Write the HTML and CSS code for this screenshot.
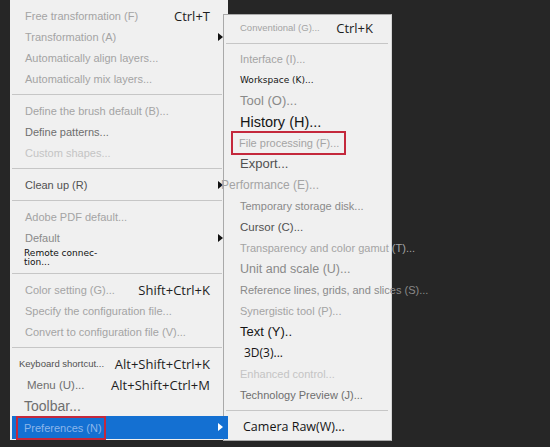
FILE: index.html
```html
<!DOCTYPE html>
<html lang="en">
<head>
    <meta charset="UTF-8">
    <meta name="viewport" content="width=device-width, initial-scale=1.0">
    <title>Edit menu</title>
    <link rel="stylesheet" href="styles.css">
</head>
<body>
 <main class="screen">
    <div class="menu">
        <div class="item off">Free transformation (F)<span class="key">Ctrl+T</span></div>
        <div class="item off">Transformation (A)<span class="arrow"></span></div>
        <div class="item off">Automatically align layers...</div>
        <div class="item off">Automatically mix layers...</div>
        <div class="sep"></div>
        <div class="item off">Define the brush default (B)...</div>
        <div class="item mid">Define patterns...</div>
        <div class="item faint">Custom shapes...</div>
        <div class="sep"></div>
        <div class="item dark">Clean up (R)<span class="arrow"></span></div>
        <div class="sep"></div>
        <div class="item off">Adobe PDF default...</div>
        <div class="item gray">Default<span class="arrow"></span></div>
        <div class="item remote">Remote connec-<br>tion...</div>
        <div class="sep"></div>
        <div class="item off">Color setting (G)...<span class="key">Shift+Ctrl+K</span></div>
        <div class="item off">Specify the configuration file...</div>
        <div class="item off">Convert to configuration file (V)...</div>
        <div class="sep"></div>
        <div class="item dark small">Keyboard shortcut...<span class="key">Alt+Shift+Ctrl+K</span></div>
        <div class="item mid menu-u">Menu (U)...<span class="key">Alt+Shift+Ctrl+M</span></div>
        <div class="item mid big">Toolbar...</div>
        <div class="item active"><span class="marked">Preferences (N)</span><span class="arrow white"></span></div>
    </div>

    <div class="submenu">
        <div class="item off tiny">Conventional (G)...<span class="key">Ctrl+K</span></div>
        <div class="sep short"></div>
        <div class="item off">Interface (I)...</div>
        <div class="item black verd">Workspace (K)...</div>
        <div class="item gray s13">Tool (O)...</div>
        <div class="item black s145">History (H)...</div>
        <div class="item off"><span class="marked">File processing (F)...</span></div>
        <div class="item dark s13">Export...</div>
        <div class="item off s12 pushed">Performance (E)...</div>
        <div class="item gray">Temporary storage disk...</div>
        <div class="item dark s115">Cursor (C)...</div>
        <div class="item off">Transparency and color gamut (T)...</div>
        <div class="item gray s125">Unit and scale (U)...</div>
        <div class="item gray">Reference lines, grids, and slices (S)...</div>
        <div class="item off">Synergistic tool (P)...</div>
        <div class="item black s13">Text (Y)..</div>
        <div class="item black os three">3D(3)...</div>
        <div class="item faint">Enhanced control...</div>
        <div class="item mid">Technology Preview (J)...</div>
        <div class="sep"></div>
        <div class="item black os camera">Camera Raw(W)...</div>
    </div>
 </main>
</body>
</html>
```

FILE: styles.css
```css
*{
    margin: 0;
    padding: 0;
    box-sizing: border-box;
}
body{
    background-color: #262626;
    font-family: "Liberation Sans", Arial, sans-serif;
    font-size: 11px;
    overflow: hidden;
}
.screen{
    display: flex;
    align-items: flex-start;
    width: 550px;
    height: 447px;
    padding-left: 10px;
}
.menu{
    width: 218px;
    height: 440px;
    padding-top: 5px;
    background-color: #f0f0f0;
}
.submenu{
    width: 169px;
    height: 427px;
    margin-top: 14px;
    margin-left: -5px;
    padding-top: 2px;
    background-color: #f0f0f0;
    border: 1px solid #a9a9a9;
    border-right-color: #d4d4d4;
}
.item{
    display: flex;
    align-items: center;
    height: 21px;
    padding-left: 15px;
    padding-right: 18px;
    white-space: nowrap;
    position: relative;
}
.submenu .item{
    padding-left: 16px;
    padding-right: 18px;
}
.key{
    margin-left: auto;
    font-family: "Open Sans", sans-serif;
    font-size: 13px;
    color: #1e1e1e;
}
.arrow{
    position: absolute;
    right: 5px;
    top: 7px;
    border-top: 4px solid transparent;
    border-bottom: 4px solid transparent;
    border-left: 5px solid #111;
}
.arrow.white{
    border-left-color: #fff;
}
.sep{
    height: 11px;
    padding-top: 5px;
    margin: 0 6px 0 2px;
}
.sep::after{
    content: "";
    display: block;
    height: 1px;
    background-color: #c6c6c6;
}
.submenu .sep{
    margin: 0 3px 0 2px;
}
.sep.short{
    height: 10px;
}

/* text shades */
.off{ color: #a4a4a4; }
.faint{ color: #c4c4c4; }
.gray{ color: #8a8a8a; }
.mid{ color: #6e6e6e; }
.dark{ color: #505050; }
.black{ color: #151515; }

.small{
    font-size: 9.5px;
    padding-left: 9px;
}
.menu-u{
    padding-left: 17px;
    font-size: 11.5px;
}
.big{
    font-size: 14px;
    padding-left: 14px;
}
.remote{
    height: 20px;
    font-family: "DejaVu Sans", sans-serif;
    font-size: 9px;
    line-height: 9px;
    color: #111;
    padding-left: 14px;
}
.tiny{ font-size: 9.5px; }
.verd{
    font-family: "DejaVu Sans", sans-serif;
    font-size: 9px;
}
.s115{ font-size: 11.5px; }
.s12{ font-size: 12px; }
.s125{ font-size: 12.5px; }
.s13{ font-size: 13px; }
.s145{ font-size: 14.5px; }
.os{
    font-family: "Open Sans", sans-serif;
}
.three{
    font-size: 12px;
    padding-left: 20px !important;
}
.camera{
    font-size: 12.5px;
    padding-left: 19px !important;
}
.submenu .pushed{
    padding-left: 0;
    margin-left: -3px;
}

.active{
    height: 23px;
    margin-left: 2px;
    padding-left: 13px;
    background-color: #1470d2;
    color: #8cb6ea;
}
.marked{
    outline: 2px solid #c4283c;
    outline-offset: 0;
    padding: 3px 2px 3px 6px;
    margin-left: -7px;
}
.submenu .marked{
    padding: 4px 5px 4px 6px;
}
.active .marked{
    padding: 4px 2px 4px 6px;
}
```
